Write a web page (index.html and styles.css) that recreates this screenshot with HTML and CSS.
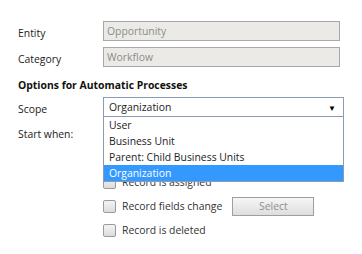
FILE: index.html
```html
<!DOCTYPE html>
<html lang="en">
<head>
    <meta charset="UTF-8">
    <title>Process properties</title>
    <link rel="stylesheet" href="styles.css">
</head>
<body>
    <div class="form">
        <div class="field">
            <div class="label">Entity</div>
            <div class="readonly">Opportunity</div>
        </div>
        <div class="field">
            <div class="label">Category</div>
            <div class="readonly">Workflow</div>
        </div>

        <h3 class="section-title">Options for Automatic Processes</h3>

        <div class="field scope-field">
            <div class="label">Scope</div>
            <div class="select-wrap">
                <div class="select">
                    <span>Organization</span>
                    <span class="arrow">&#9660;</span>
                </div>
                <ul class="dropdown">
                    <li>User</li>
                    <li>Business Unit</li>
                    <li>Parent: Child Business Units</li>
                    <li class="selected">Organization</li>
                </ul>
            </div>
        </div>

        <div class="start-row">
            <div class="label">Start when:</div>
            <!-- first rows sit under the open scope list -->
            <div class="checks">
                <label class="check"><span class="box"></span>Record is assigned</label>
                <label class="check"><span class="box"></span>Record fields change <button class="select-btn">Select</button></label>
                <label class="check"><span class="box"></span>Record is deleted</label>
            </div>
        </div>
    </div>
</body>
</html>
```

FILE: styles.css
```css
body {
    margin: 0;
    background-color: #ffffff;
    color: #222222;
    font-family: "Open Sans", "Noto Sans", sans-serif;
    font-size: 10.4px;
    width: 362px;
    height: 254px;
    overflow: hidden;
}
.form {
    padding: 21px 0 0 18px;
}
.field {
    display: flex;
    align-items: flex-end;
    margin-bottom: 6px;
}
.label {
    width: 85px;
    line-height: 15px;
    flex-shrink: 0;
}
.readonly {
    width: 237px;
    height: 20px;
    box-sizing: border-box;
    border: 1px solid #a8a8a8;
    background-color: #ebeae7;
    color: #8c8c8c;
    padding: 0 3px;
    line-height: 18px;
}
.section-title {
    font-size: 10.4px;
    font-weight: bold;
    margin: 11px 0 4px 0;
    line-height: 15px;
    color: #111111;
}
.scope-field {
    margin-bottom: 0;
}
.select-wrap {
    position: relative;
    width: 241px;
}
.select {
    display: flex;
    justify-content: space-between;
    align-items: center;
    height: 20px;
    box-sizing: border-box;
    border: 1px solid #8b9ab5;
    padding: 0 7px 0 5px;
    background-color: #ffffff;
}
.arrow {
    font-size: 8px;
    color: #000000;
}
.dropdown {
    position: absolute;
    top: 19px;
    left: 0;
    right: 0;
    margin: 0;
    padding: 0;
    list-style: none;
    background-color: #ffffff;
    border: 1px solid #8b9ab5;
    z-index: 2;
}
.dropdown li {
    height: 16px;
    line-height: 16px;
    padding-left: 5px;
}
.dropdown .selected {
    background-color: #3399ff;
    color: #ffffff;
}
.start-row {
    display: flex;
    margin-top: 5px;
}
.start-row .label {
    line-height: 24px;
}
.checks {
    padding-top: 48px;
}
.check {
    display: flex;
    align-items: center;
    height: 24px;
    color: #333333;
}
.box {
    width: 11px;
    height: 11px;
    border: 1px solid #9a9a9a;
    border-radius: 2px;
    background: linear-gradient(#f4f4f4, #dcdcdc);
    margin-right: 6px;
}
.select-btn {
    margin-left: 10px;
    width: 82px;
    height: 19px;
    font-family: inherit;
    font-size: 10.4px;
    color: #8f8f8f;
    border: 1px solid #9f9f9f;
    background: linear-gradient(#f6f6f6, #dedede);
    padding: 0;
}
```
